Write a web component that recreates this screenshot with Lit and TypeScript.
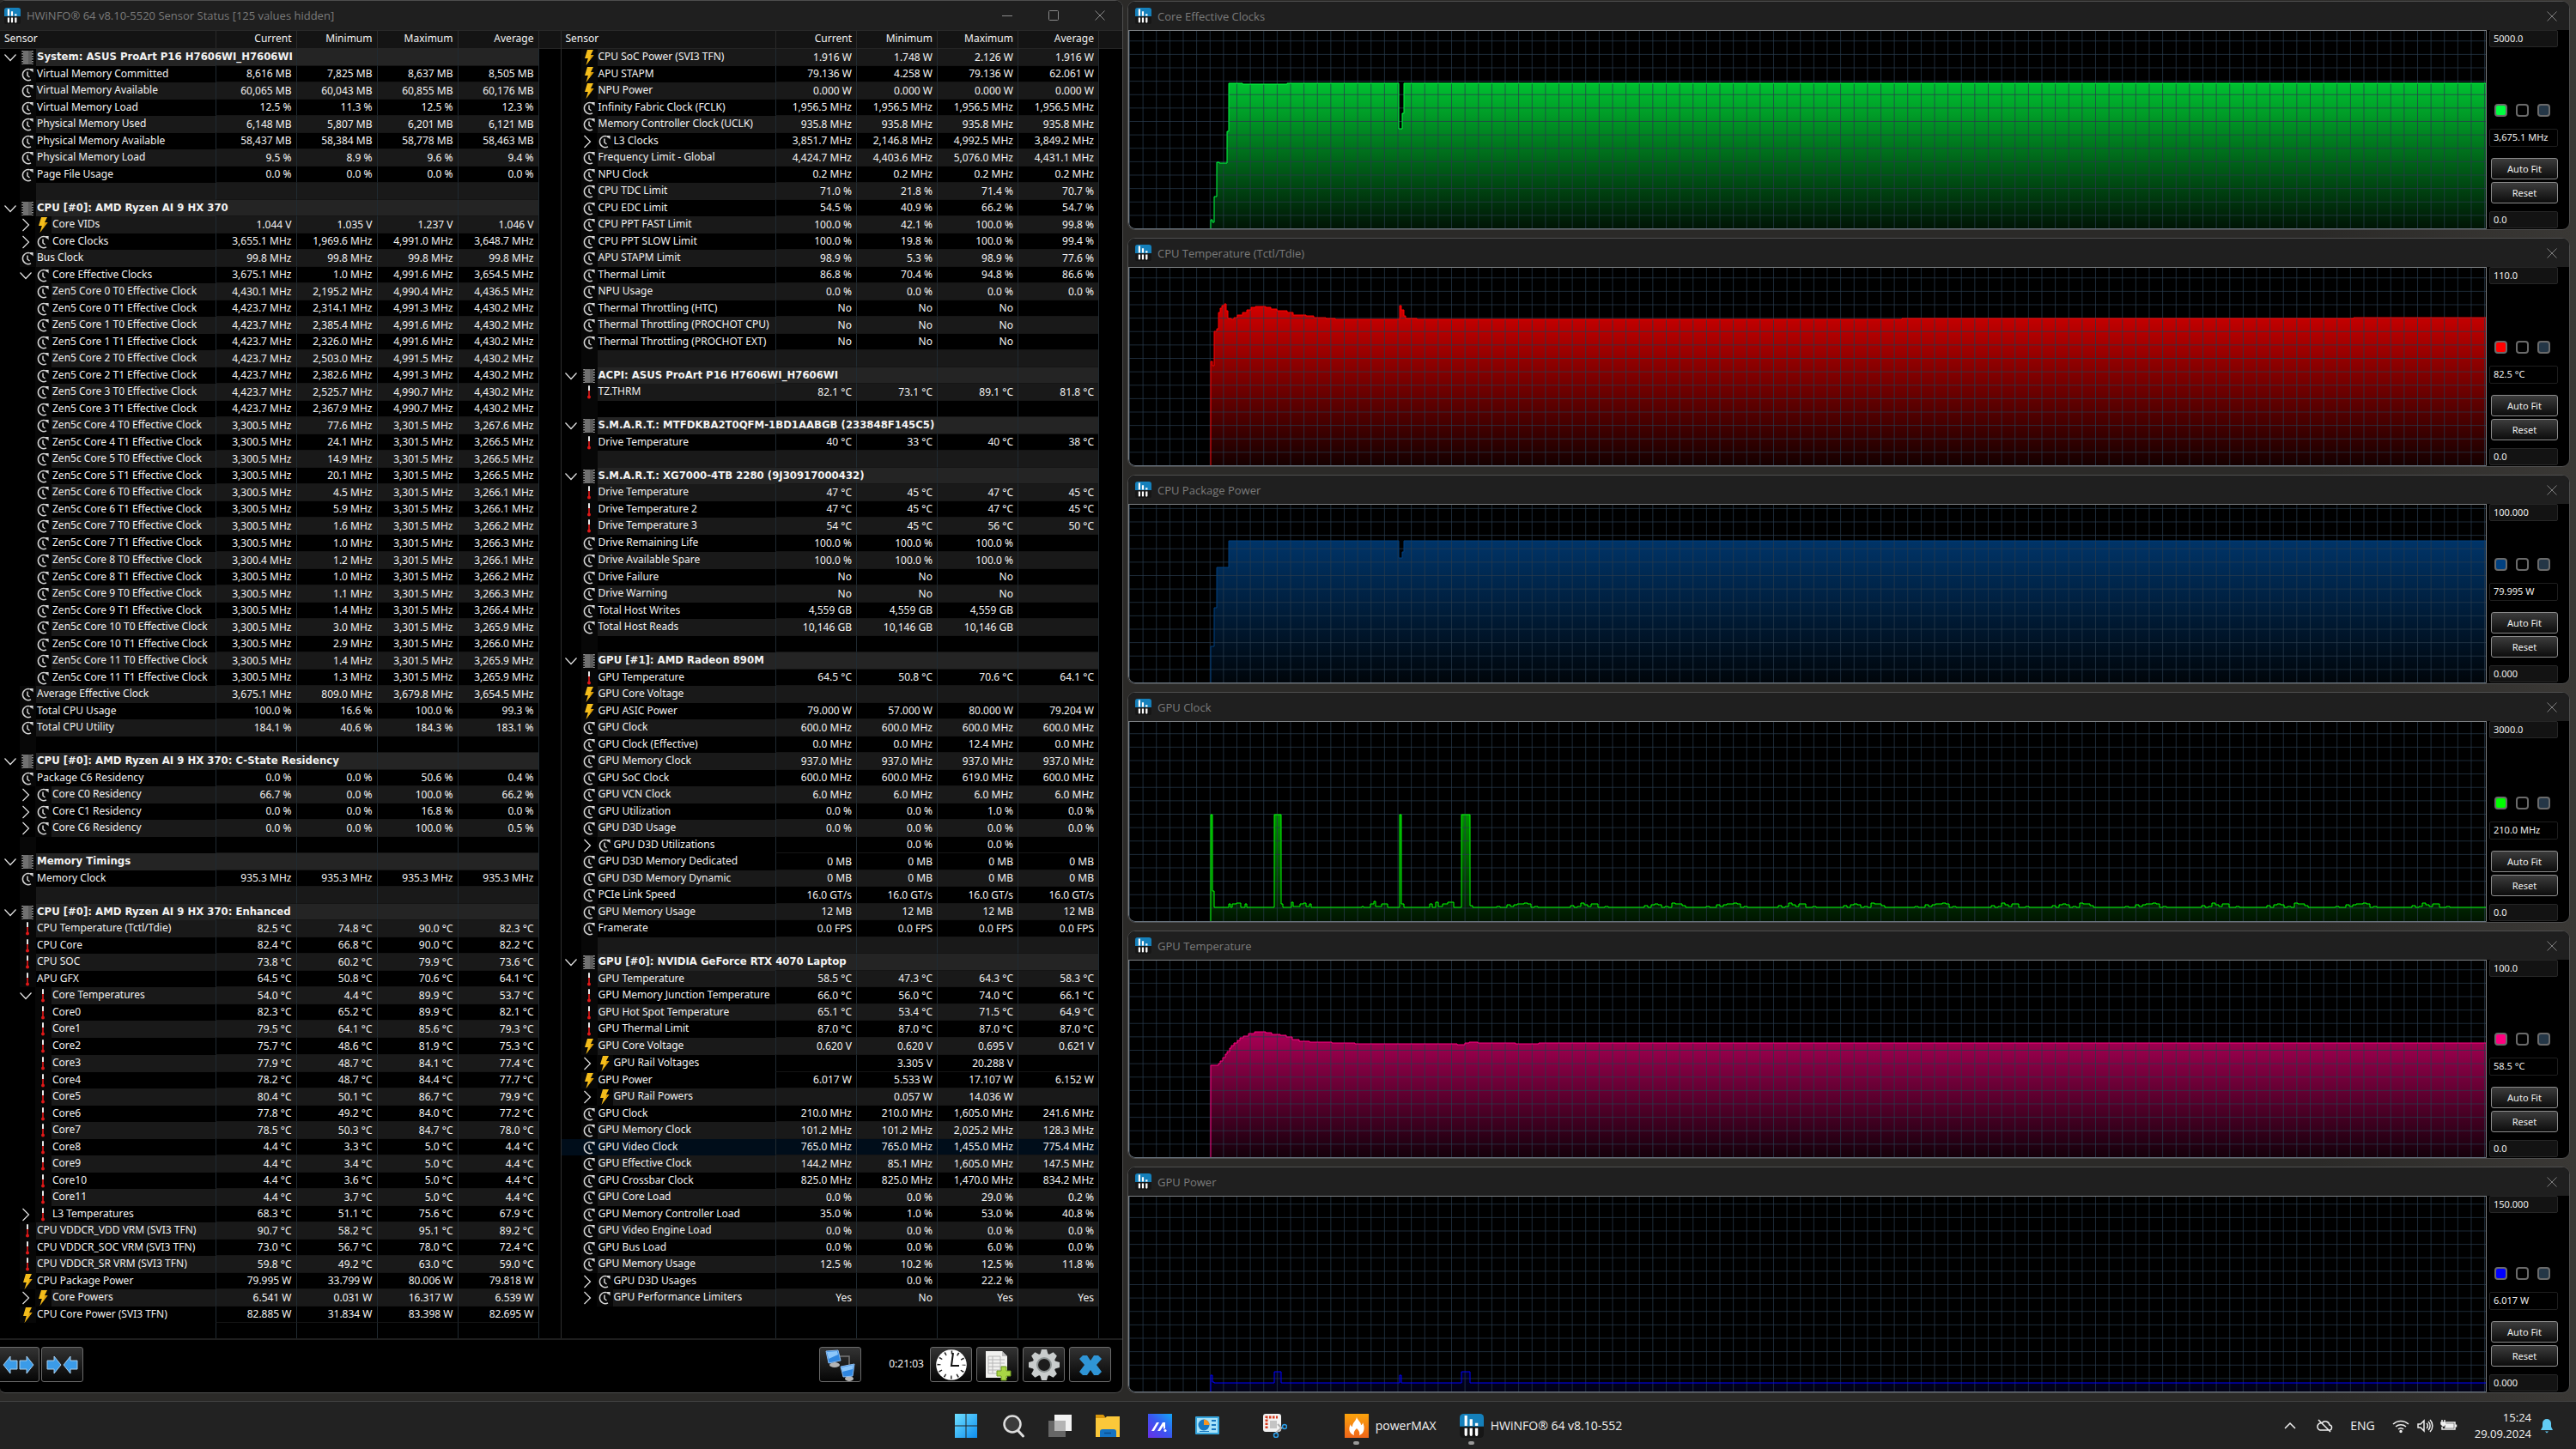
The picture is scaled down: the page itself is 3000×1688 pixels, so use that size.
import { LitElement, html, svg, css, nothing } from "lit";
import { customElement, property } from "lit/decorators.js";
import { classMap } from "lit/directives/class-map.js";

type Kind = "head" | "blank" | "clock" | "temp" | "bolt";
interface Row {
  kind: Kind;
  fold: "" | "open" | "closed" | "child";
  name: string;
  values: string[];
  striped: boolean;
  selected: boolean;
}

/*
 * One sensor per line: a two-letter code, the name, then the four values.
 * First letter: H group heading, C clock/usage, T temperature, B power/voltage.
 * Second letter: - plain, > collapsed branch, v expanded branch, . child of a branch.
 * A trailing "~" keeps the stripe of the row for the next one, "*" selects the row.
 */
function parseRows(source: string, firstStriped: boolean): Row[] {
  const kinds: Record<string, Kind> = { H: "head", C: "clock", T: "temp", B: "bolt" };
  const folds: Record<string, Row["fold"]> = { "-": "", ">": "closed", v: "open", ".": "child" };
  let striped = firstStriped;
  return source.trim().split("\n").map((raw) => {
    const line = raw.trim();
    const mark = line.slice(-1);
    const body = mark === "~" || mark === "*" ? line.slice(0, -1) : line;
    const [name, ...values] = body.slice(3).split("|");
    const row: Row = {
      kind: line === "=" ? "blank" : kinds[line[0]],
      fold: line === "=" ? "" : folds[line[1]],
      name: name ?? "",
      values: ["", "", "", ""].map((_, i) => values[i] ?? ""),
      striped,
      selected: mark === "*",
    };
    if (mark !== "~") striped = !striped;
    return row;
  });
}

const leftRows = parseRows(`
H- System: ASUS ProArt P16 H7606WI_H7606WI
C- Virtual Memory Committed|8,616 MB|7,825 MB|8,637 MB|8,505 MB
C- Virtual Memory Available|60,065 MB|60,043 MB|60,855 MB|60,176 MB
C- Virtual Memory Load|12.5 %|11.3 %|12.5 %|12.3 %
C- Physical Memory Used|6,148 MB|5,807 MB|6,201 MB|6,121 MB
C- Physical Memory Available|58,437 MB|58,384 MB|58,778 MB|58,463 MB
C- Physical Memory Load|9.5 %|8.9 %|9.6 %|9.4 %
C- Page File Usage|0.0 %|0.0 %|0.0 %|0.0 %
=
H- CPU [#0]: AMD Ryzen AI 9 HX 370
B> Core VIDs|1.044 V|1.035 V|1.237 V|1.046 V
C> Core Clocks|3,655.1 MHz|1,969.6 MHz|4,991.0 MHz|3,648.7 MHz
C- Bus Clock|99.8 MHz|99.8 MHz|99.8 MHz|99.8 MHz
Cv Core Effective Clocks|3,675.1 MHz|1.0 MHz|4,991.6 MHz|3,654.5 MHz
C. Zen5 Core 0 T0 Effective Clock|4,430.1 MHz|2,195.2 MHz|4,990.4 MHz|4,436.5 MHz
C. Zen5 Core 0 T1 Effective Clock|4,423.7 MHz|2,314.1 MHz|4,991.3 MHz|4,430.2 MHz
C. Zen5 Core 1 T0 Effective Clock|4,423.7 MHz|2,385.4 MHz|4,991.6 MHz|4,430.2 MHz
C. Zen5 Core 1 T1 Effective Clock|4,423.7 MHz|2,326.0 MHz|4,991.6 MHz|4,430.2 MHz
C. Zen5 Core 2 T0 Effective Clock|4,423.7 MHz|2,503.0 MHz|4,991.5 MHz|4,430.2 MHz
C. Zen5 Core 2 T1 Effective Clock|4,423.7 MHz|2,382.6 MHz|4,991.3 MHz|4,430.2 MHz
C. Zen5 Core 3 T0 Effective Clock|4,423.7 MHz|2,525.7 MHz|4,990.7 MHz|4,430.2 MHz
C. Zen5 Core 3 T1 Effective Clock|4,423.7 MHz|2,367.9 MHz|4,990.7 MHz|4,430.2 MHz
C. Zen5c Core 4 T0 Effective Clock|3,300.5 MHz|77.6 MHz|3,301.5 MHz|3,267.6 MHz
C. Zen5c Core 4 T1 Effective Clock|3,300.5 MHz|24.1 MHz|3,301.5 MHz|3,266.5 MHz
C. Zen5c Core 5 T0 Effective Clock|3,300.5 MHz|14.9 MHz|3,301.5 MHz|3,266.5 MHz
C. Zen5c Core 5 T1 Effective Clock|3,300.5 MHz|20.1 MHz|3,301.5 MHz|3,266.5 MHz
C. Zen5c Core 6 T0 Effective Clock|3,300.5 MHz|4.5 MHz|3,301.5 MHz|3,266.1 MHz
C. Zen5c Core 6 T1 Effective Clock|3,300.5 MHz|5.9 MHz|3,301.5 MHz|3,266.1 MHz
C. Zen5c Core 7 T0 Effective Clock|3,300.5 MHz|1.6 MHz|3,301.5 MHz|3,266.2 MHz
C. Zen5c Core 7 T1 Effective Clock|3,300.5 MHz|1.0 MHz|3,301.5 MHz|3,266.3 MHz
C. Zen5c Core 8 T0 Effective Clock|3,300.4 MHz|1.2 MHz|3,301.5 MHz|3,266.1 MHz
C. Zen5c Core 8 T1 Effective Clock|3,300.5 MHz|1.0 MHz|3,301.5 MHz|3,266.2 MHz
C. Zen5c Core 9 T0 Effective Clock|3,300.5 MHz|1.1 MHz|3,301.5 MHz|3,266.3 MHz
C. Zen5c Core 9 T1 Effective Clock|3,300.5 MHz|1.4 MHz|3,301.5 MHz|3,266.4 MHz
C. Zen5c Core 10 T0 Effective Clock|3,300.5 MHz|3.0 MHz|3,301.5 MHz|3,265.9 MHz
C. Zen5c Core 10 T1 Effective Clock|3,300.5 MHz|2.9 MHz|3,301.5 MHz|3,266.0 MHz
C. Zen5c Core 11 T0 Effective Clock|3,300.5 MHz|1.4 MHz|3,301.5 MHz|3,265.9 MHz
C. Zen5c Core 11 T1 Effective Clock|3,300.5 MHz|1.3 MHz|3,301.5 MHz|3,265.9 MHz
C- Average Effective Clock|3,675.1 MHz|809.0 MHz|3,679.8 MHz|3,654.5 MHz
C- Total CPU Usage|100.0 %|16.6 %|100.0 %|99.3 %
C- Total CPU Utility|184.1 %|40.6 %|184.3 %|183.1 %
=
H- CPU [#0]: AMD Ryzen AI 9 HX 370: C-State Residency
C- Package C6 Residency|0.0 %|0.0 %|50.6 %|0.4 %
C> Core C0 Residency|66.7 %|0.0 %|100.0 %|66.2 %
C> Core C1 Residency|0.0 %|0.0 %|16.8 %|0.0 %
C> Core C6 Residency|0.0 %|0.0 %|100.0 %|0.5 %
=
H- Memory Timings
C- Memory Clock|935.3 MHz|935.3 MHz|935.3 MHz|935.3 MHz
=
H- CPU [#0]: AMD Ryzen AI 9 HX 370: Enhanced
T- CPU Temperature (Tctl/Tdie)|82.5 °C|74.8 °C|90.0 °C|82.3 °C
T- CPU Core|82.4 °C|66.8 °C|90.0 °C|82.2 °C
T- CPU SOC|73.8 °C|60.2 °C|79.9 °C|73.6 °C
T- APU GFX|64.5 °C|50.8 °C|70.6 °C|64.1 °C
Tv Core Temperatures|54.0 °C|4.4 °C|89.9 °C|53.7 °C
T. Core0|82.3 °C|65.2 °C|89.9 °C|82.1 °C
T. Core1|79.5 °C|64.1 °C|85.6 °C|79.3 °C
T. Core2|75.7 °C|48.6 °C|81.9 °C|75.3 °C
T. Core3|77.9 °C|48.7 °C|84.1 °C|77.4 °C
T. Core4|78.2 °C|48.7 °C|84.4 °C|77.7 °C
T. Core5|80.4 °C|50.1 °C|86.7 °C|79.9 °C
T. Core6|77.8 °C|49.2 °C|84.0 °C|77.2 °C
T. Core7|78.5 °C|50.3 °C|84.7 °C|78.0 °C
T. Core8|4.4 °C|3.3 °C|5.0 °C|4.4 °C
T. Core9|4.4 °C|3.4 °C|5.0 °C|4.4 °C
T. Core10|4.4 °C|3.6 °C|5.0 °C|4.4 °C
T. Core11|4.4 °C|3.7 °C|5.0 °C|4.4 °C
T> L3 Temperatures|68.3 °C|51.1 °C|75.6 °C|67.9 °C
T- CPU VDDCR_VDD VRM (SVI3 TFN)|90.7 °C|58.2 °C|95.1 °C|89.2 °C
T- CPU VDDCR_SOC VRM (SVI3 TFN)|73.0 °C|56.7 °C|78.0 °C|72.4 °C
T- CPU VDDCR_SR VRM (SVI3 TFN)|59.8 °C|49.2 °C|63.0 °C|59.0 °C
B- CPU Package Power|79.995 W|33.799 W|80.006 W|79.818 W
B> Core Powers|6.541 W|0.031 W|16.317 W|6.539 W
B- CPU Core Power (SVI3 TFN)|82.885 W|31.834 W|83.398 W|82.695 W
`, true);

const rightRows = parseRows(`
B- CPU SoC Power (SVI3 TFN)|1.916 W|1.748 W|2.126 W|1.916 W
B- APU STAPM|79.136 W|4.258 W|79.136 W|62.061 W
B- NPU Power|0.000 W|0.000 W|0.000 W|0.000 W
C- Infinity Fabric Clock (FCLK)|1,956.5 MHz|1,956.5 MHz|1,956.5 MHz|1,956.5 MHz
C- Memory Controller Clock (UCLK)|935.8 MHz|935.8 MHz|935.8 MHz|935.8 MHz
C> L3 Clocks|3,851.7 MHz|2,146.8 MHz|4,992.5 MHz|3,849.2 MHz
C- Frequency Limit - Global|4,424.7 MHz|4,403.6 MHz|5,076.0 MHz|4,431.1 MHz
C- NPU Clock|0.2 MHz|0.2 MHz|0.2 MHz|0.2 MHz
C- CPU TDC Limit|71.0 %|21.8 %|71.4 %|70.7 %
C- CPU EDC Limit|54.5 %|40.9 %|66.2 %|54.7 %
C- CPU PPT FAST Limit|100.0 %|42.1 %|100.0 %|99.8 %
C- CPU PPT SLOW Limit|100.0 %|19.8 %|100.0 %|99.4 %
C- APU STAPM Limit|98.9 %|5.3 %|98.9 %|77.6 %
C- Thermal Limit|86.8 %|70.4 %|94.8 %|86.6 %
C- NPU Usage|0.0 %|0.0 %|0.0 %|0.0 %
C- Thermal Throttling (HTC)|No|No|No|
C- Thermal Throttling (PROCHOT CPU)|No|No|No|
C- Thermal Throttling (PROCHOT EXT)|No|No|No|
=
H- ACPI: ASUS ProArt P16 H7606WI_H7606WI
T- TZ.THRM|82.1 °C|73.1 °C|89.1 °C|81.8 °C
=
H- S.M.A.R.T.: MTFDKBA2T0QFM-1BD1AABGB (233848F145C5)
T- Drive Temperature|40 °C|33 °C|40 °C|38 °C
=
H- S.M.A.R.T.: XG7000-4TB 2280 (9J30917000432)
T- Drive Temperature|47 °C|45 °C|47 °C|45 °C
T- Drive Temperature 2|47 °C|45 °C|47 °C|45 °C
T- Drive Temperature 3|54 °C|45 °C|56 °C|50 °C
C- Drive Remaining Life|100.0 %|100.0 %|100.0 %|
C- Drive Available Spare|100.0 %|100.0 %|100.0 %|
C- Drive Failure|No|No|No|
C- Drive Warning|No|No|No|
C- Total Host Writes|4,559 GB|4,559 GB|4,559 GB|
C- Total Host Reads|10,146 GB|10,146 GB|10,146 GB|
=
H- GPU [#1]: AMD Radeon 890M
T- GPU Temperature|64.5 °C|50.8 °C|70.6 °C|64.1 °C
B- GPU Core Voltage
B- GPU ASIC Power|79.000 W|57.000 W|80.000 W|79.204 W
C- GPU Clock|600.0 MHz|600.0 MHz|600.0 MHz|600.0 MHz
C- GPU Clock (Effective)|0.0 MHz|0.0 MHz|12.4 MHz|0.0 MHz
C- GPU Memory Clock|937.0 MHz|937.0 MHz|937.0 MHz|937.0 MHz
C- GPU SoC Clock|600.0 MHz|600.0 MHz|619.0 MHz|600.0 MHz
C- GPU VCN Clock|6.0 MHz|6.0 MHz|6.0 MHz|6.0 MHz
C- GPU Utilization|0.0 %|0.0 %|1.0 %|0.0 %
C- GPU D3D Usage|0.0 %|0.0 %|0.0 %|0.0 %
C> GPU D3D Utilizations||0.0 %|0.0 %|~
C- GPU D3D Memory Dedicated|0 MB|0 MB|0 MB|0 MB
C- GPU D3D Memory Dynamic|0 MB|0 MB|0 MB|0 MB
C- PCIe Link Speed|16.0 GT/s|16.0 GT/s|16.0 GT/s|16.0 GT/s
C- GPU Memory Usage|12 MB|12 MB|12 MB|12 MB
C- Framerate|0.0 FPS|0.0 FPS|0.0 FPS|0.0 FPS
=
H- GPU [#0]: NVIDIA GeForce RTX 4070 Laptop
T- GPU Temperature|58.5 °C|47.3 °C|64.3 °C|58.3 °C
T- GPU Memory Junction Temperature|66.0 °C|56.0 °C|74.0 °C|66.1 °C
T- GPU Hot Spot Temperature|65.1 °C|53.4 °C|71.5 °C|64.9 °C
T- GPU Thermal Limit|87.0 °C|87.0 °C|87.0 °C|87.0 °C
B- GPU Core Voltage|0.620 V|0.620 V|0.695 V|0.621 V
B> GPU Rail Voltages||3.305 V|20.288 V|~
B- GPU Power|6.017 W|5.533 W|17.107 W|6.152 W
B> GPU Rail Powers||0.057 W|14.036 W|
C- GPU Clock|210.0 MHz|210.0 MHz|1,605.0 MHz|241.6 MHz
C- GPU Memory Clock|101.2 MHz|101.2 MHz|2,025.2 MHz|128.3 MHz
C- GPU Video Clock|765.0 MHz|765.0 MHz|1,455.0 MHz|775.4 MHz*
C- GPU Effective Clock|144.2 MHz|85.1 MHz|1,605.0 MHz|147.5 MHz
C- GPU Crossbar Clock|825.0 MHz|825.0 MHz|1,470.0 MHz|834.2 MHz
C- GPU Core Load|0.0 %|0.0 %|29.0 %|0.2 %
C- GPU Memory Controller Load|35.0 %|1.0 %|53.0 %|40.8 %
C- GPU Video Engine Load|0.0 %|0.0 %|0.0 %|0.0 %
C- GPU Bus Load|0.0 %|0.0 %|6.0 %|0.0 %
C- GPU Memory Usage|12.5 %|10.2 %|12.5 %|11.8 %
C> GPU D3D Usages||0.0 %|22.2 %|
C> GPU Performance Limiters|Yes|No|Yes|Yes
`, true);

const rowIcons = {
  head: html`<svg class="row-icon" viewBox="0 0 18 18" aria-hidden="true">
    <path d="M3.5 1v16M14.500 1v16" stroke="#9a9a9a" stroke-width="2.500" stroke-dasharray="1.500 1.500"/>
    <rect x="4" y="1" width="10" height="16" fill="#5c5c5c"/><path d="M4 1h6v16H4z" fill="#707070"/></svg>`,
  clock: html`<svg class="row-icon" viewBox="0 0 18 18" fill="none" stroke="#d4d4d4" aria-hidden="true">
    <path d="M11.500 2.800a6.500 6.500 0 1 0 1.500 12" stroke-width="1.500"/>
    <path d="M9 5.500v4.500l2.500 2" stroke-width="1.500"/><path d="M11 2h4.600v4.400l-1.400-1.400-2.200-1z" fill="#d4d4d4" stroke="none"/></svg>`,
  temp: html`<svg class="row-icon" viewBox="0 0 18 18" aria-hidden="true">
    <path d="M9 2v7" stroke="#e8e8e8" stroke-width="2" stroke-linecap="round"/>
    <path d="M9 7v8" stroke="#b81414" stroke-width="2"/><circle cx="9" cy="14.500" r="2" fill="#e01818"/></svg>`,
  bolt: html`<svg class="row-icon" viewBox="0 0 18 18" aria-hidden="true">
    <path d="M7 0h7l-3 6h3.500L5.500 18l2.300-8H4z" fill="#f4bd1b"/><path d="M11 6h3.500L5.500 18l5-8z" fill="#d99a08"/></svg>`,
};

const hwLogo = html`<svg class="logo" viewBox="0 0 20 20" aria-hidden="true">
  <rect width="20" height="20" rx="3" fill="#161616"/><path d="M3 0h14a3 3 0 0 1 3 3v7.500H0V3a3 3 0 0 1 3-3z" fill="#1580bb"/>
  <path d="M4 1.500h2.300V10H4zM8.300 4.500h2.300V10H8.300zM12.800 7.700h2.400V10h-2.400z" fill="#fff"/>
  <path d="M4 12h2.300v5.400a1.100 1.100 0 0 1-2.300 0zM8.300 12h2.300v5.400a1.100 1.100 0 0 1-2.300 0zM12.800 12h2.400v5.400a1.200 1.200 0 0 1-2.400 0z" fill="#fff"/></svg>`;

const cross = html`<svg class="glyph" viewBox="0 0 12 12" aria-hidden="true"><path d="M.5.5l11 11M11.500.5l-11 11"/></svg>`;

@customElement("sensor-table")
class SensorTable extends LitElement {
  @property({ attribute: false }) rows: Row[] = [];
  @property() label = "";

  static styles = css`
    :host { display: block; font: 12px/18px "Noto Sans", "DejaVu Sans Condensed", sans-serif; color: #f2f2f2; }
    table { width: 100%; height: 100%; table-layout: fixed; border-spacing: 0; }
    th, td { padding: 0; white-space: nowrap; }
    .value-col { width: 94px; }
    .rest-col { width: var(--rest-width, 26px); }
    thead tr { height: 21px; }
    thead th { background: #141414; font-weight: 400; text-align: right; padding: 0 5px 2px 0;
      border-left: 1px solid #2a2a2a; border-bottom: 1px solid #242424; }
    thead th:first-child { text-align: left; padding-left: 5px; border-left: 0; }
    tbody tr { height: 20px; }
    tbody tr:nth-child(2n) { height: 19px; }
    tbody tr:nth-child(30n) { height: 20px; }
    tbody tr.filler { height: auto; }
    tbody td { text-align: right; padding-right: 5px; border-left: 1px solid #202a31; border-bottom: 1px solid #151515; }
    tbody td:last-child, .filler td { border-bottom: 0; background: #000; }
    .filler td:first-child { border-left: 0; }
    .striped { background: #191919; }
    .head { background: #242424; font-weight: 700; }
    .head .name { font: 700 13px/18px "DejaVu Sans Condensed", "Noto Sans", sans-serif; }
    .selected { background: #000d1a; }
    .name { font-weight: inherit; text-align: left; }
    .cell { display: flex; align-items: stretch; height: 100%; }
    .gutter { background: #000; display: flex; align-items: center; justify-content: center; width: 23px; flex: none; }
    .branch { width: 18px; justify-content: flex-start; }
    .selected .gutter, .selected .mark { background: #000d1a; }
    .mark { background: #070707; width: 19px; flex: none; display: flex; align-items: center; }
    .text { padding-left: 1px; flex: none; }
    .row-icon { width: 18px; height: 18px; }
    .fold { appearance: none; border: 0; background: none; padding: 0; width: 14px; height: 16px; display: grid; place-items: center; }
    .fold svg { width: 14px; height: 16px; fill: none; stroke: #e4e4e4; stroke-width: 1.2; }
  `;

  private fold(open: boolean, name: string) {
    return html`<button class="fold" aria-label=${name} aria-expanded=${open ? "true" : "false"}>
      <svg viewBox="0 0 14 16">${open ? svg`<path d="M.5 4.500l6.500 7 6.500-7"/>` : svg`<path d="M3.500 1l7 7-7 7"/>`}</svg></button>`;
  }

  private row(r: Row) {
    const nested = r.fold !== "";
    const classes = { striped: r.striped, head: r.kind === "head", selected: r.selected };
    return html`<tr class=${classMap(classes)}>
      <th class="name" scope="row"><div class="cell">
        <span class="gutter">${r.kind === "head" ? this.fold(true, r.name) : nothing}</span>
        ${nested ? html`<span class="gutter branch">${r.fold === "child" ? nothing : this.fold(r.fold === "open", r.name)}</span>` : nothing}
        <span class="mark">${r.kind === "blank" ? nothing : rowIcons[r.kind]}</span>
        <span class="text">${r.name}</span>
      </div></th>
      ${r.values.map((v) => html`<td>${v}</td>`)}<td></td>
    </tr>`;
  }

  render() {
    return html`<table aria-label=${this.label}>
      <colgroup><col>${[1, 2, 3, 4].map(() => html`<col class="value-col">`)}<col class="rest-col"></colgroup>
      <thead><tr><th scope="col">Sensor</th><th scope="col">Current</th><th scope="col">Minimum</th>
        <th scope="col">Maximum</th><th scope="col">Average</th><th></th></tr></thead>
      <tbody>${this.rows.map((r) => this.row(r))}
        <tr class="filler"><td></td><td></td><td></td><td></td><td></td><td></td></tr></tbody>
    </table>`;
  }
}

interface Graph {
  title: string;
  max: string;
  min: string;
  value: string;
  color: string;
  height: number;
  points: [number, number][];
}

const plotWidth = 1580;

/* Short bursts of activity along an otherwise level curve. */
function bursts(base: number, starts: number[]): [number, number][] {
  const shapes = [
    [1, 0, 0, 3, 1, 3, 4, 4, 5, 4, 0, 1, 0],
    [0, 2, 0, 1, 5, 3, 1, 4, 4, 0, 0, 1, 0],
    [2, 0, 3, 4, 3, 0, 1, 0, 5, 4, 4, 2, 0],
  ];
  return starts.flatMap((x, n) => shapes[n % 3].map((s, i): [number, number] => [x + i * 4, base - s]));
}

const graphs: Graph[] = [
  { title: "Core Effective Clocks", max: "5000.0", min: "0.0", value: "3,675.1 MHz", color: "#00ff40", height: 230,
    points: [[95, 220], [97, 223], [99, 193], [102, 153], [105, 154], [114, 117], [116, 61], [132, 62], [184, 61], [314, 114], [318, 96], [320, 61]] },
  { title: "CPU Temperature (Tctl/Tdie)", max: "110.0", min: "0.0", value: "82.5 °C", color: "#ff0000", height: 230,
    points: [[95, 109], [97, 114], [99, 74], [102, 71], [104, 52], [106, 47], [108, 44], [111, 42], [113, 50], [115, 59], [119, 60], [122, 58],
      [126, 55], [132, 52], [137, 49], [142, 46], [147, 45], [159, 46], [165, 48], [172, 50], [184, 52], [191, 55], [206, 56], [215, 58],
      [229, 59], [240, 60], [315, 44], [317, 49], [320, 56], [322, 59], [335, 60], [900, 59], [1426, 58]] },
  { title: "CPU Package Power", max: "100.000", min: "0.000", value: "79.995 W", color: "#004080", height: 207,
    points: [[95, 165], [99, 120], [102, 73], [113, 73], [116, 42], [314, 62], [318, 55], [320, 42]] },
  { title: "GPU Clock", max: "3000.0", min: "0.0", value: "210.0 MHz", color: "#00ff00", height: 232,
    points: [[95, 108], [97, 197], [99, 216], [116, 212], [118, 216], [120, 212], [125, 211], [130, 216], [135, 212], [137, 216], [169, 108], [177, 212],
      [179, 216], [189, 210], [191, 215], [199, 212], [203, 211], [206, 215], [210, 212], [212, 216], [271, 215], [273, 216], [281, 212], [285, 209],
      [287, 215], [294, 212], [301, 216], [315, 108], [317, 212], [320, 216], [350, 212], [353, 216], [357, 210], [360, 215], [365, 212], [371, 210],
      [378, 216], [387, 108], [397, 214], [400, 216], ...bursts(216, [428, 510, 600, 672, 752, 832, 915, 1000, 1075, 1160, 1245, 1325, 1405, 1490])] },
  { title: "GPU Temperature", max: "100.0", min: "0.0", value: "58.5 °C", color: "#ff0080", height: 229,
    points: [[95, 122], [104, 120], [106, 117], [109, 113], [112, 109], [114, 106], [117, 102], [119, 99], [122, 96], [126, 93], [129, 90], [133, 88],
      [139, 85], [146, 83], [159, 84], [166, 86], [176, 87], [183, 89], [190, 92], [198, 94], [210, 95], [236, 96], [263, 97], [382, 98],
      [391, 96], [396, 95], [406, 96], [450, 97], [477, 96]] },
  { title: "GPU Power", max: "150.000", min: "0.000", value: "6.017 W", color: "#0000ff", height: 227,
    points: [[95, 208], [97, 216], [99, 217], [169, 204], [177, 217], [315, 208], [317, 217], [387, 204], [397, 217]] },
];

@customElement("graph-window")
class GraphWindow extends LitElement {
  @property({ attribute: false }) graph!: Graph;

  static styles = css`
    :host { display: grid; grid-template-rows: 33px minmax(0, 1fr); min-height: 0; background: #000; color: #eee;
      border: 1px solid #4e4e4e; border-radius: 9px; overflow: hidden; box-sizing: border-box;
      font: 11px/18px "Noto Sans", "DejaVu Sans Condensed", sans-serif; }
    header { display: flex; align-items: center; gap: 7px; padding: 0 14px 0 8px; background: #1f1f1f; }
    .logo { width: 19px; height: 19px; }
    h2 { margin: 0; flex: 1; font: 400 13px/20px "Open Sans", "Noto Sans", sans-serif; color: #7b7b7b; }
    button { font: inherit; color: inherit; }
    .close { appearance: none; border: 0; background: none; padding: 0; display: grid; }
    .glyph { width: 12px; height: 12px; fill: none; stroke: #808080; stroke-width: 1; }
    .body { display: grid; grid-template-columns: minmax(0, 1fr) 96px; min-height: 0; }
    .plot { display: grid; border: 1px solid #7c7f82; border-bottom-color: #66717c; min-height: 0; border-radius: 0 0 0 8px; overflow: hidden; }
    .plot svg { width: 100%; height: 100%; contain: size; display: block; }
    .side { display: flex; flex-direction: column; justify-content: space-between; padding: 0 13px 1px 3px; }
    .limit, .value { box-sizing: border-box; width: 100%; height: 20px; margin: 0; padding: 0 4px 2px; font: inherit; color: inherit;
      background: #131313; border: 1px solid #262626; border-radius: 2px; display: block; }
    .value { background: #000; border-color: #1e1e1e; height: 21px; }
    .controls { display: flex; flex-direction: column; }
    .swatches { display: flex; gap: 10px; padding: 0 6px 14px; }
    .swatch { appearance: none; width: 15px; height: 15px; padding: 0; border: 2px solid #6a6a6a; border-radius: 4px; }
    .black { background: #000; }
    .grid-color { background: #243646; }
    .buttons { display: grid; gap: 3px; padding: 13px 0 9px 2px; }
    .push { appearance: none; height: 25px; padding: 0; border: 1px solid #8a8a8a; border-radius: 3px;
      background: linear-gradient(#3c3c3c, #0c0c0c); text-align: center; }
  `;

  private plot(g: Graph) {
    let line = `M${g.points[0][0]} ${g.height}`;
    for (const [x, y] of g.points) line += `H${x}V${y}`;
    line += `H${plotWidth + 2}`;
    return html`<svg viewBox="0 0 ${plotWidth} ${g.height}" preserveAspectRatio="none" role="img" aria-label=${g.title}>
      <defs>
        <linearGradient id="fill" gradientUnits="userSpaceOnUse" x1="0" y1="0" x2="0" y2=${g.height}>
          <stop offset="0" stop-color=${g.color}/><stop offset="1" stop-color=${g.color} stop-opacity="0.08"/>
        </linearGradient>
        <pattern id="cells" patternUnits="userSpaceOnUse" width="15.625" height="15.625" patternTransform="translate(0 ${g.height})">
          <path d="M0 0.4H15.625M0.4 0V15.625" stroke="#263a4b" stroke-width="0.8"/>
        </pattern>
      </defs>
      <path d="${line}V${g.height}Z" fill="url(#fill)"/>
      <rect width=${plotWidth} height=${g.height} fill="url(#cells)"/>
      <path d=${line} fill="none" stroke=${g.color} stroke-width="1"/>
    </svg>`;
  }

  render() {
    const g = this.graph;
    return html`
      <header>${hwLogo}<h2>${g.title}</h2><button class="close" aria-label="Close">${cross}</button></header>
      <div class="body">
        <div class="plot">${this.plot(g)}</div>
        <div class="side">
          <input class="limit" aria-label="Maximum" .value=${g.max}>
          <div class="controls">
            <div class="swatches">
              <button class="swatch" style="background:${g.color}" aria-label="Line color"></button>
              <button class="swatch black" aria-label="Background color"></button>
              <button class="swatch grid-color" aria-label="Grid color"></button>
            </div>
            <input class="value" aria-label="Current value" readonly .value=${g.value}>
            <div class="buttons"><button class="push">Auto Fit</button><button class="push">Reset</button></div>
            <input class="limit" aria-label="Minimum" .value=${g.min}>
          </div>
        </div>
      </div>`;
  }
}

const arrowLeft = svg`<path d="M1 12L9 2v5h8v10H9v5z"/>`;
const arrowRight = svg`<path d="M17 12L9 2v5H1v10h8v5z"/>`;

@customElement("app-root")
class AppRoot extends LitElement {
  static styles = css`
    :host { display: grid; grid-template-rows: minmax(0, 1fr) auto; min-height: 100vh; background: linear-gradient(90deg, #2b2a28 90%, #3a3835);
      color: #f2f2f2; font: 12px/18px "Noto Sans", "DejaVu Sans Condensed", sans-serif; }
    main { display: grid; grid-template-columns: minmax(0, 1308fr) minmax(0, 1680fr); gap: 5px; padding: 0 7px 9px 0; }
    button { appearance: none; font: inherit; color: inherit; border: 0; background: none; padding: 0; }
    .window { display: grid; grid-template-rows: 35px minmax(0, 1fr) 63px; background: #000; overflow: hidden;
      border: 1px solid #4e4e4e; border-left: 0; border-radius: 6px 9px 9px 6px; box-sizing: border-box; }
    .titlebar { display: flex; align-items: center; gap: 7px; padding: 0 20px 0 5px; background: #1f1f1f; border-bottom: 1px solid #2a2a2a; box-sizing: border-box; }
    h1 { margin: 0; flex: 1; font: 400 13px/20px "Open Sans", "Noto Sans", sans-serif; color: #7b7b7b; }
    .logo { width: 19px; height: 19px; }
    .window-controls { display: flex; gap: 42px; }
    .glyph { display: block; width: 12px; height: 12px; fill: none; stroke: #8a8a8a; stroke-width: 1; }
    .tables { display: grid; grid-template-columns: minmax(0, 653fr) minmax(0, 655fr); }
    .second { border-left: 1px solid #2e2e2e; --rest-width: 28px; }
    .toolbar { display: flex; align-items: center; gap: 5px; padding: 0 13px 4px 0; border-top: 2px solid #1e1e1e; box-sizing: border-box; }
    .tool { width: 49px; height: 41px; box-sizing: border-box; border: 1px solid #6a6a6a; border-radius: 3px;
      background: linear-gradient(#333, #050505); display: grid; place-items: center; }
    .tool svg { width: 38px; height: 38px; display: block; }
    .pair { display: flex; gap: 2px; margin-left: -3px; }
    .spacer { flex: 1; }
    .elapsed { padding: 0 2px 2px 27px; }
    .graphs { display: grid; gap: 9px; padding-top: 1px;
      grid-template-rows: minmax(0, 267fr) minmax(0, 267fr) minmax(0, 244fr) minmax(0, 269fr) minmax(0, 266fr) minmax(0, 264fr); }
    .taskbar { display: grid; grid-template-columns: 1fr auto 1fr; align-items: center; height: 56px; box-sizing: border-box;
      background: #222; border-top: 1px solid #424242; font: 14px/20px "Open Sans", "Noto Sans", sans-serif; }
    .apps { display: flex; align-items: center; gap: 27px; }
    .apps svg { width: 28px; height: 28px; display: block; }
    .vendor { margin-left: 6px; }
    .snip { margin: 0 40px 0 24px; }
    .app { display: flex; align-items: center; gap: 8px; position: relative; }
    .app::after { content: ""; position: absolute; left: 10px; bottom: -8px; width: 7px; height: 4px; border-radius: 2px; background: #9a9a9a; }
    .tray { display: flex; align-items: center; justify-content: flex-end; gap: 20px; padding-right: 24px; }
    .tray svg { width: 20px; height: 20px; display: block; fill: none; stroke: #f0f0f0; stroke-width: 1.5; }
    .status, .notice { display: flex; align-items: center; gap: 8px; }
    .clock { text-align: right; line-height: 19px; font-size: 13px; }
  `;

  private toolbar() {
    return html`<footer class="toolbar">
      <div class="pair">
        <button class="tool" aria-label="Expand columns"><svg viewBox="0 0 38 24" fill="#3b9be8" stroke="#a8cdec" stroke-width="1">${arrowLeft}<g transform="translate(19 0)">${arrowRight}</g></svg></button>
        <button class="tool" aria-label="Shrink columns"><svg viewBox="0 0 38 24" fill="#3b9be8" stroke="#a8cdec" stroke-width="1">${arrowRight}<g transform="translate(19 0)">${arrowLeft}</g></svg></button>
      </div>
      <span class="spacer"></span>
      <button class="tool" aria-label="Remote monitoring"><svg viewBox="0 0 38 38">
        <path d="M18 9h11v10" fill="none" stroke="#777" stroke-width="1.500"/>
        <ellipse cx="12" cy="19" rx="6" ry="3" fill="#b4b4b4"/><path d="M2 3l14 -1 3 12-14 3z" fill="#2f86e0" stroke="#8cbcf0"/><path d="M3 4l12-1 1 4L5 12z" fill="#8cc6fa"/>
        <ellipse cx="29" cy="35" rx="5" ry="3" fill="#b4b4b4"/><path d="M19 21l16-3-2 14-11 1z" fill="#2f86e0" stroke="#8cbcf0"/><path d="M20 22l14-3-1 5-12 3z" fill="#8cc6fa"/></svg></button>
      <span class="elapsed">0:21:03</span>
      <button class="tool" aria-label="Reset clock"><svg viewBox="0 0 38 38">
        <circle cx="19" cy="19" r="17.800" fill="#fff"/><circle cx="19" cy="19" r="14.500" fill="none" stroke="#222" stroke-width="4" stroke-dasharray="1.500 6.092" stroke-dashoffset=".75"/>
        <path d="M21 5L19 20h9" fill="none" stroke="#111" stroke-width="2"/></svg></button>
      <button class="tool" aria-label="Start logging"><svg viewBox="0 0 38 38">
        <path d="M5 3h19l6 6v25H5z" fill="#f1f1ef"/><path d="M24 3l6 6h-6z" fill="#bbb"/>
        <path d="M8 9h14M8 13h19M8 17h19M8 21h19M8 25h14M8 29h12M8 9v20M13 9v20M22 9v20" stroke="#b5b5b5" fill="none"/>
        <path d="M23 21h6v5h5v6h-5v5h-6v-5h-5v-6h5z" fill="#a9d545" stroke="#6d9a1e"/></svg></button>
      <button class="tool" aria-label="Settings"><svg viewBox="0 0 38 38">
        <g fill="#c9cdcd">${[0, 45, 90, 135].map((a) => svg`<path d="M16 1h6l2 7v22l-2 7h-6l-2-7V8z" transform="rotate(${a} 19 19)"/>`)}</g>
        <circle cx="19" cy="19" r="13.500" fill="#c9cdcd"/><circle cx="19" cy="19" r="9" fill="#8e9494"/><circle cx="19" cy="19" r="7" fill="#1c1c1c"/></svg></button>
      <button class="tool" aria-label="Close sensors"><svg viewBox="0 0 38 38">
        <path d="M10 8h5l4 6 4-6h5l4 4-6 7 6 8-4 4h-5l-4-6-4 6h-5l-4-4 6-8-6-7z" fill="#2f95d6"/></svg></button>
    </footer>`;
  }

  private taskbar() {
    return html`<nav class="taskbar" aria-label="Taskbar">
      <span></span>
      <div class="apps">
        <button aria-label="Start"><svg viewBox="0 0 28 28">
          <defs><linearGradient id="start" x1="0" y1="0" x2="1" y2="1"><stop stop-color="#6fe0ff"/><stop offset="1" stop-color="#0d8df0"/></linearGradient></defs>
          <path d="M1 0h12.500v13.500H1zM14.500 0H27v13.500H14.500zM1 14.500h12.500V28H1zM14.500 14.500H27V28H14.500z" fill="url(#start)"/></svg></button>
        <button aria-label="Search"><svg viewBox="0 0 28 28"><circle cx="13" cy="12" r="9.500" stroke="#dedede" stroke-width="2.500" fill="#3c3c3c"/><path d="M20 20l5.500 6" stroke="#dedede" stroke-width="3" stroke-linecap="round"/></svg></button>
        <button aria-label="Task view"><svg viewBox="0 0 28 28"><path d="M0 8h20v19H0z" fill="#666"/><path d="M7 1h20v19H7z" fill="#f2f2f2"/><path d="M7 8h13v12H7z" fill="#b4b4b4"/></svg></button>
        <button aria-label="File Explorer"><svg viewBox="0 0 28 28"><path d="M0 1h9l3 4H0z" fill="#d8960c"/><path d="M0 5h11l2-2h15v24H0z" fill="#fbc83a"/><path d="M5 27v-6a3 3 0 0 1 3-3h13a3 3 0 0 1 3 3v6z" fill="#1473c4"/><path d="M10 22.500h8" stroke="#0c4c8c" stroke-width="1.500"/></svg></button>
        <button class="vendor" aria-label="MyASUS"><svg viewBox="0 0 28 28">
          <defs><linearGradient id="asus" x1="1" y1="0" x2="0" y2="1"><stop stop-color="#12a8f8"/><stop offset=".5" stop-color="#3a55f0"/><stop offset="1" stop-color="#6a30e8"/></linearGradient></defs>
          <path d="M0 0h28v28H0z" fill="url(#asus)"/><path d="M4 20l6-10h3L7 20zM11 20l6-10h3v7l-2 1v-4l-4 6z" fill="#fff"/><circle cx="20" cy="19.500" r="1.500" fill="#fff"/></svg></button>
        <button aria-label="Control Panel"><svg viewBox="0 0 28 28"><rect y="3" width="28" height="21" rx="1" fill="#35a4dc"/><rect x="2" y="5" width="24" height="17" fill="#a6e2fa"/>
          <circle cx="10" cy="13" r="6.500" fill="#1777c0"/><path d="M10 13V6.500A6.500 6.500 0 0 1 16.500 13z" fill="#f7941d"/>
          <path d="M19 8h5M19 13h5M19 18h5" stroke="#1777c0" stroke-width="2"/><path d="M5 20.500h11" stroke="#1777c0"/></svg></button>
        <button class="snip" aria-label="Snipping Tool"><svg viewBox="0 0 28 28"><rect width="21" height="21" rx="3" fill="#f2f2f2"/>
          <path d="M4 17V4h13" fill="none" stroke="#d83b1e" stroke-width="3" stroke-dasharray="2.500 1.500"/><path d="M8 8h8v9H8z" fill="#c4c4c4"/>
          <path d="M17 12l5 5M22 16l-7 6" stroke="#b0b0b0" stroke-width="2"/>
          <circle cx="15" cy="25" r="2.500" fill="none" stroke="#2ba0ec" stroke-width="1.500"/><circle cx="25" cy="15" r="2.500" fill="none" stroke="#2ba0ec" stroke-width="1.500"/></svg></button>
        <button class="app"><svg viewBox="0 0 28 28">
          <defs><linearGradient id="flame" x1="0" y1="0" x2="0" y2="1"><stop stop-color="#fba30c"/><stop offset="1" stop-color="#f0661a"/></linearGradient></defs>
          <path d="M0 0h28v28H0z" fill="url(#flame)"/>
          <path d="M14 3c0 4 5 6 5 10 1 0 2-1 2-3 3 6 2 13-4 15 1-3 0-5-3-8-3 3-4 5-3 8-6-2-7-8-4-13 0 2 1 3 2 3 0-5 5-7 5-12z" fill="#fff"/></svg>powerMAX</button>
        <button class="app">${hwLogo}HWiNFO® 64 v8.10-552</button>
      </div>
      <div class="tray">
        <button aria-label="Show hidden icons"><svg viewBox="0 0 20 20"><path d="M4 13l6-6 6 6"/></svg></button>
        <button aria-label="OneDrive"><svg viewBox="0 0 20 20"><path d="M5 15h10a3 3 0 0 0 1-6 5 5 0 0 0-9-2 4 4 0 0 0-2 8zM3 3l14 14"/></svg></button>
        <button aria-label="Keyboard language">ENG</button>
        <div class="status">
          <svg viewBox="0 0 20 20" role="img" aria-label="Wi-Fi"><path d="M1 8a13 13 0 0 1 18 0M4 11a9 9 0 0 1 12 0M7 14a4 4 0 0 1 6 0"/><circle cx="10" cy="16.500" r="1" fill="#f0f0f0"/></svg>
          <svg viewBox="0 0 20 20" role="img" aria-label="Volume"><path d="M2 8v4h3l4 4V4L5 8zM12 7a4 4 0 0 1 0 6M14 5a7 7 0 0 1 0 10M16 3a10 10 0 0 1 0 14"/></svg>
          <svg viewBox="0 0 20 20" role="img" aria-label="Battery"><path d="M7 6h10v8H2v-3M18.500 8.500v3"/><path d="M7 8h8v4H6z" fill="#f0f0f0"/><path d="M2 3v3M5 3v3M1 6h5v2l-2 2H3L1 8z" fill="#f0f0f0"/></svg>
        </div>
        <div class="notice">
          <time class="clock">15:24<br>29.09.2024</time>
          <svg viewBox="0 0 20 20" role="img" aria-label="Notifications"><path d="M10 2a5 5 0 0 0-5 5v4l-2 4h14l-2-4V7a5 5 0 0 0-5-5zM8 16.500h4l-2 2z" fill="#62cdf5" stroke="none"/></svg>
        </div>
      </div>
    </nav>`;
  }

  render() {
    return html`<main>
      <section class="window">
        <header class="titlebar">${hwLogo}<h1>HWiNFO® 64 v8.10-5520 Sensor Status [125 values hidden]</h1>
          <div class="window-controls">
            <button aria-label="Minimize"><svg class="glyph" viewBox="0 0 12 12"><path d="M0 6.500h12"/></svg></button>
            <button aria-label="Maximize"><svg class="glyph" viewBox="0 0 12 12"><rect x=".5" y=".5" width="11" height="11" rx="1"/></svg></button>
            <button aria-label="Close">${cross}</button>
          </div>
        </header>
        <div class="tables">
          <sensor-table label="System and CPU sensors" .rows=${leftRows}></sensor-table>
          <sensor-table class="second" label="Storage and GPU sensors" .rows=${rightRows}></sensor-table>
        </div>
        ${this.toolbar()}
      </section>
      <section class="graphs">${graphs.map((g) => html`<graph-window .graph=${g}></graph-window>`)}</section>
    </main>
    ${this.taskbar()}`;
  }
}
